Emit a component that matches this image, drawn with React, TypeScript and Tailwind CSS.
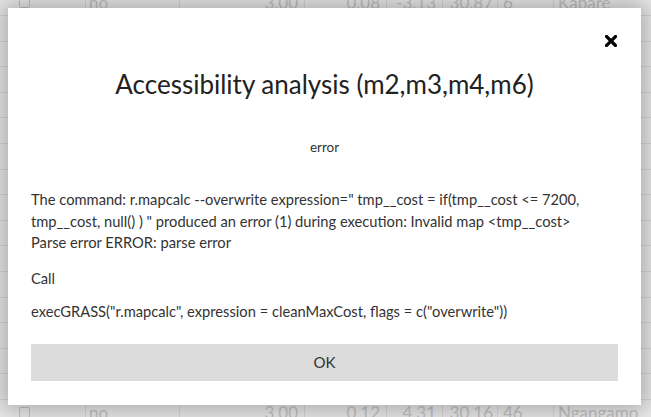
import React from "react";

const rows = Array.from({ length: 18 }, (_, i) => i);
const top = ["no", "3.00", "0.08", "-3.13", "30.87", "6", "Kabare"];
const bottom = ["no", "3.00", "0.12", "4.31", "30.16", "46", "Ngangamo"];
const empty = ["", "", "", "", "", "", ""];

function Row({ vals }: { vals: string[] }) {
  return (
    <div className="flex h-[25.6px] shrink-0 items-center border-b border-[#d9d9d9] text-[17px] text-[#c4c4c4]">
      <div className="flex h-full w-[86px] items-center border-r border-[#d9d9d9] pl-[19px]">
        <div className="h-[11px] w-[11px] rounded-[2px] border border-[#c4c4c4]" />
      </div>
      <div className="h-full w-[94px] border-r border-[#d9d9d9] pl-[3px] leading-[25px]">{vals[0]}</div>
      <div className="h-full w-[125px] border-r border-[#d9d9d9] pr-[6px] text-right leading-[25px]">{vals[1]}</div>
      <div className="h-full w-[82px] border-r border-[#d9d9d9] pr-[6px] text-right leading-[25px]">{vals[2]}</div>
      <div className="h-full w-[56px] border-r border-[#d9d9d9] pr-[6px] text-right leading-[25px]">{vals[3]}</div>
      <div className="h-full w-[55px] border-r border-[#d9d9d9] pr-[4px] text-right leading-[25px]">{vals[4]}</div>
      <div className="h-full w-[56px] border-r border-[#d9d9d9] pl-[5px] leading-[25px]">{vals[5]}</div>
      <div className="h-full flex-1 pl-[4px] leading-[25px]">{vals[6]}</div>
    </div>
  );
}

export default function App() {
  return (
    <div
      className="relative h-[417px] w-[651px] overflow-hidden bg-[#ececec]"
      style={{ fontFamily: "Lato, 'Open Sans', sans-serif" }}
    >
      <div className="mt-[-9.6px] flex flex-col">
        {rows.map((i) => (
          <Row key={i} vals={i === 0 ? top : i === 16 ? bottom : empty} />
        ))}
      </div>
      <div className="absolute left-[8px] top-[8px] flex h-[397px] w-[633px] flex-col bg-white px-[23px] shadow-[0_0_22px_6px_rgba(0,0,0,0.28)]">
        <div className="flex justify-end pr-[1px] pt-[27px]">
          <svg width="12" height="12" viewBox="0 0 12 12">
            <path d="M1.5 1.5 L10.5 10.5 M10.5 1.5 L1.5 10.5" stroke="#000" strokeWidth="3.2" strokeLinecap="square" />
          </svg>
        </div>
        <div className="mt-[21px] text-center text-[26px] leading-[32px] text-[#222]">
          Accessibility analysis (m2,m3,m4,m6)
        </div>
        <div className="mt-[38px] text-center text-[13.5px] leading-[18px] text-[#333]">error</div>
        <div className="mt-[33px] pr-[15px] text-[14.7px] leading-[21.5px] text-[#333]">
          The command: r.mapcalc --overwrite expression=" tmp__cost = if(tmp__cost &lt;= 7200, tmp__cost, null() ) " produced an error (1) during execution: Invalid map &lt;tmp__cost&gt; Parse error ERROR: parse error
        </div>
        <div className="mt-[14px] text-[14.7px] leading-[21.5px] text-[#333]">Call</div>
        <div className="mt-[12px] text-[14.7px] leading-[21.5px] text-[#333]">
          execGRASS("r.mapcalc", expression = cleanMaxCost, flags = c("overwrite"))
        </div>
        <button className="mt-[21px] h-[37px] w-full bg-[#dcdcdc] text-[15px] text-[#333]">OK</button>
      </div>
    </div>
  );
}
